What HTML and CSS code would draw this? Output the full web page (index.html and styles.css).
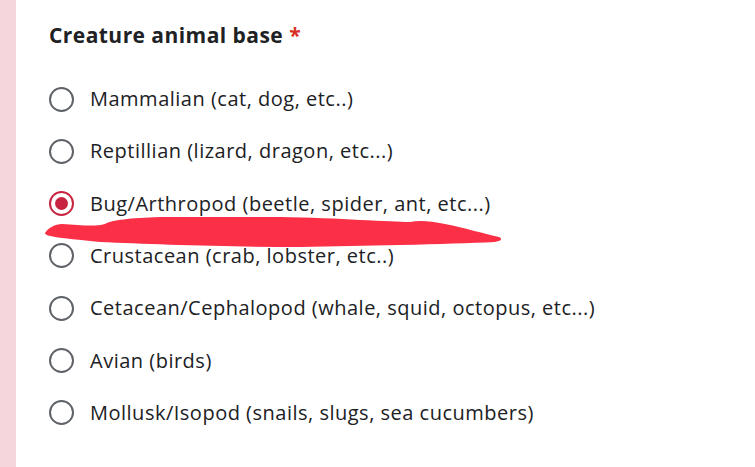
FILE: index.html
```html
<!DOCTYPE html>
<html>
<head>
<meta charset="utf-8">
<link rel="stylesheet" href="styles.css">
</head>
<body>
<div class="page">
  <div class="strip"></div>
  <div class="card">
    <div class="title">Creature animal base <span class="req">*</span></div>
    <div class="options">
      <div class="opt"><span class="radio"></span><span class="label">Mammalian (cat, dog, etc..)</span></div>
      <div class="opt"><span class="radio"></span><span class="label">Reptillian (lizard, dragon, etc...)</span></div>
      <div class="opt"><span class="radio checked"></span><span class="label">Bug/Arthropod (beetle, spider, ant, etc...)</span></div>
      <div class="opt"><span class="radio"></span><span class="label">Crustacean (crab, lobster, etc..)</span></div>
      <div class="opt"><span class="radio"></span><span class="label">Cetacean/Cephalopod (whale, squid, octopus, etc...)</span></div>
      <div class="opt"><span class="radio"></span><span class="label">Avian (birds)</span></div>
      <div class="opt"><span class="radio"></span><span class="label">Mollusk/Isopod (snails, slugs, sea cucumbers)</span></div>
    </div>
  </div>
  <svg class="scribble" width="755" height="467" viewBox="0 0 755 467">
    <path d="M45 233 C 48 228, 55 224, 62 224 C 80 225, 95 227, 105 224 C 112 220, 130 218, 160 217 L 280 217 C 340 218, 390 222, 410 222 C 420 220, 430 221, 445 224 C 465 228, 485 234, 499 237 C 503 239, 501 241, 495 242 C 470 243, 440 244, 400 245 L 300 247 C 220 247, 150 244, 100 242 C 80 240, 62 238, 55 237 C 50 236, 45 235, 45 233 Z" fill="#fb2f45"/>
  </svg>
</div>
</body>
</html>
```
FILE: styles.css
```css
html, body {
  margin: 0;
  padding: 0;
  background: #ffffff;
}
.page {
  position: relative;
  display: flex;
  width: 755px;
  height: 467px;
  overflow: hidden;
}
.strip {
  width: 16px;
  flex: none;
  background: #f4d6dc;
}
.card {
  flex: 1;
  padding: 20px 0 0 33px;
  font-family: "Open Sans", sans-serif;
  color: #202124;
}
.title {
  font-size: 21px;
  font-weight: 700;
  line-height: 30px;
  letter-spacing: 0.45px;
}
.req {
  color: #d93025;
}
.options {
  margin-top: 36px;
  display: flex;
  flex-direction: column;
  gap: 26.33px;
}
.opt {
  display: flex;
  align-items: center;
  height: 26px;
  gap: 16px;
}
.radio {
  width: 21px;
  height: 21px;
  border: 2.5px solid #5f6368;
  border-radius: 50%;
  flex: none;
  position: relative;
}
.radio.checked {
  border-color: #c9243f;
}
.radio.checked::after {
  content: "";
  position: absolute;
  left: 4px;
  top: 4px;
  width: 13px;
  height: 13px;
  border-radius: 50%;
  background: #c9243f;
}
.label {
  font-size: 20px;
  line-height: 26px;
  letter-spacing: 0.5px;
  color: #202124;
}
.scribble {
  position: absolute;
  left: 0;
  top: 0;
  pointer-events: none;
}
```
